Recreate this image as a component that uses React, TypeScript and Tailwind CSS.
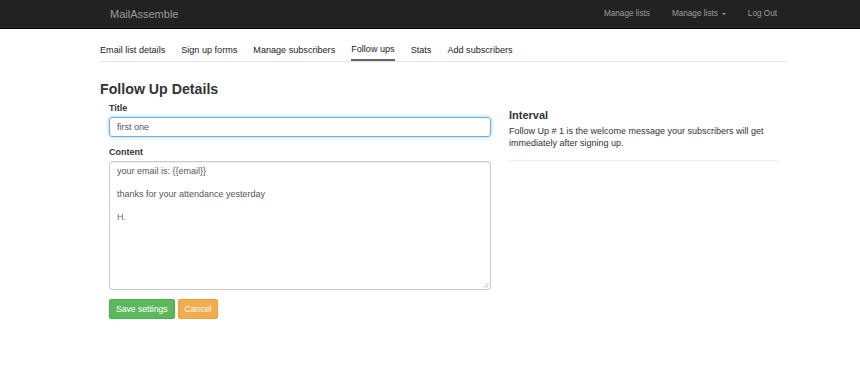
import React from "react";

const tabs = [
  "Email list details",
  "Sign up forms",
  "Manage subscribers",
  "Follow ups",
  "Stats",
  "Add subscribers",
];

const App: React.FC = () => {
  return (
    <div className="min-h-[376px] bg-white font-['Liberation_Sans',Arial,sans-serif] text-[9px] text-[#333]">
      {/* Top navbar */}
      <nav className="h-[29px] bg-[#222] border-b border-[#080808]">
        <div className="ml-[100px] w-[687px] h-full flex items-center justify-between">
          <span className="pl-[10px] text-[11px] text-[#9d9d9d]">MailAssemble</span>
          <ul className="flex items-center gap-[22px] pr-[10px] text-[8.2px] text-[#9d9d9d]">
            <li>Manage lists</li>
            <li className="flex items-center gap-[4px]">
              Manage lists
              <span className="inline-block w-0 h-0 border-l-[2.5px] border-r-[2.5px] border-t-[2.5px] border-l-transparent border-r-transparent border-t-[#9d9d9d] mt-[1px]"></span>
            </li>
            <li>Log Out</li>
          </ul>
        </div>
      </nav>

      <div className="ml-[100px] w-[687px] pt-[10px]">
        {/* Tabs */}
        <ul className="flex h-[23px] border-b border-[#e5e5e5] text-[9.1px] text-[#222]">
          {tabs.map((tab) => (
            <li
              key={tab}
              className={
                "h-full flex items-center pt-[2px] mr-[16px] " +
                (tab === "Follow ups" ? "border-b-2 border-[#666] mb-[-1px]" : "")
              }
            >
              {tab}
            </li>
          ))}
        </ul>

        <h2 className="mt-[17px] text-[14.2px] font-bold leading-[20px] text-[#333]">Follow Up Details</h2>

        <div className="flex">
          {/* Form */}
          <div className="w-[400px] px-[9px]">
            <label className="block mt-[3px] font-bold leading-[12px]">Title</label>
            <input
              readOnly
              value="first one"
              className="mt-[3px] block w-full h-[20px] px-[7px] rounded-[3px] border border-[#66afe9] shadow-[0_0_4px_rgba(102,175,233,0.6)] text-[#555] outline-none"
            />
            <label className="block mt-[9px] font-bold leading-[12px]">Content</label>
            <div className="mt-[3px] relative h-[129px] rounded-[3px] border border-[#ccc] shadow-[inset_0_1px_1px_rgba(0,0,0,0.075)] px-[7px] py-[4px] leading-[11.6px] text-[#555]">
              <p>your email is: {"{{email}}"}</p>
              <p>&nbsp;</p>
              <p>thanks for your attendance yesterday</p>
              <p>&nbsp;</p>
              <p className="text-[#56708c]">H.</p>
              <svg className="absolute right-[1px] bottom-[1px]" width="6" height="6" viewBox="0 0 6 6">
                <path d="M1 5.5L5.5 1M3.5 5.5L5.5 3.5" stroke="#999" strokeWidth="0.7" />
              </svg>
            </div>
            <div className="mt-[9px] flex gap-[3px] text-[8.6px]">
              <button className="h-[20px] px-[6px] rounded-[2px] bg-[#5cb85c] border border-[#4cae4c] text-white">
                Save settings
              </button>
              <button className="h-[20px] px-[6px] rounded-[2px] bg-[#f0ad4e] border border-[#eea236] text-white">
                Cancel
              </button>
            </div>
          </div>

          {/* Interval */}
          <div className="w-[287px] px-[9px] pt-[10px]">
            <h4 className="text-[11px] font-bold leading-[13px] text-[#333]">Interval</h4>
            <p className="mt-[4px] leading-[11.7px] text-[#333]">
              Follow Up # 1 is the welcome message your subscribers will get immediately after signing up.
            </p>
            <hr className="mt-[11px] border-t border-[#eee]" />
          </div>
        </div>
      </div>
    </div>
  );
};

export default App;
